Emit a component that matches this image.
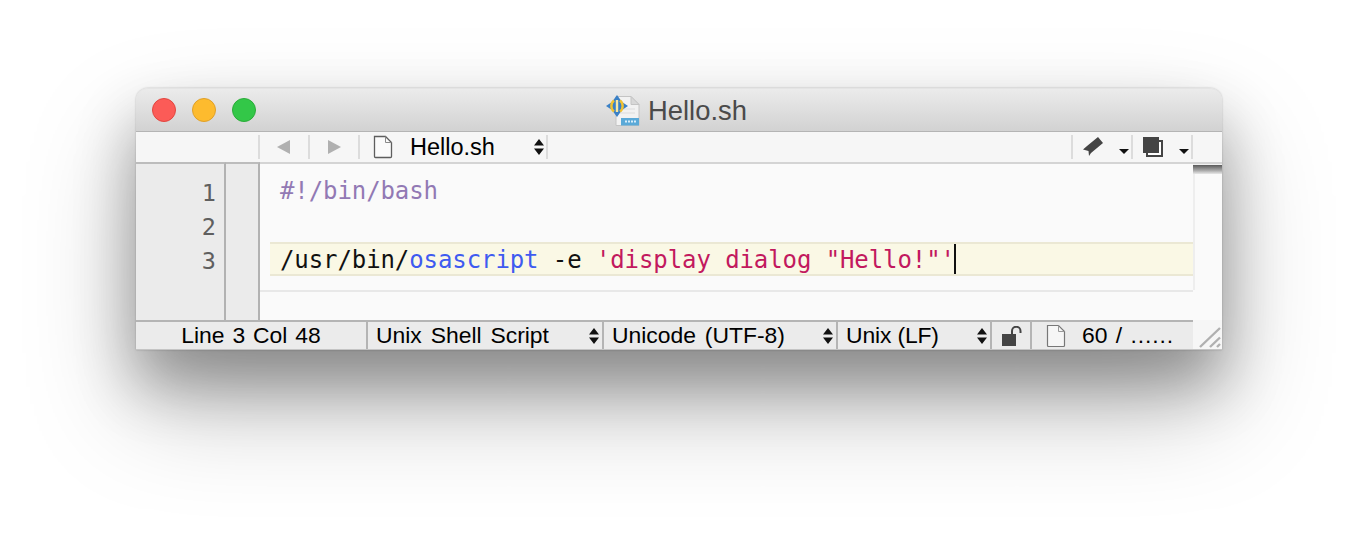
<div class="page">
  <div class="window">
    <header class="titlebar">
      <div class="lights">
        <span class="light red"></span>
        <span class="light yellow"></span>
        <span class="light green"></span>
      </div>
      <div class="title">
        <svg width="36" height="32" viewBox="0 0 36 32">
          <path d="M10 1.500h15l8 8v21H10z" fill="#f2f2f2" stroke="#c4c4c4" />
          <path d="M25 1.500v8h8z" fill="#d8d8d8" stroke="#c4c4c4" />
          <path d="M14 14h15M14 18h15" stroke="#dcdcdc" />
          <rect x="15" y="23" width="18" height="7.500" fill="#5aa9d8" />
          <path d="M19 26.500h2M22 26.500h2M25 26.500h2M28 26.500h2" stroke="#d9eefa" stroke-width="2" />
          <path d="M0 11L6 7 11 0 16 7 22 11 16 15 11 22 6 15z" fill="#3a80c6" />
          <path d="M8 5.500C4.500 8 4.500 14 8 16.500M14 5.500C17.500 8 17.500 14 14 16.500" fill="none" stroke="#f2c230" stroke-width="2.400" />
          <path d="M11 5v12" stroke="#f7e7a6" stroke-width="2.400" />
        </svg>
        <span>Hello.sh</span>
      </div>
    </header>

    <div class="toolbar">
      <div class="tool-spacer"></div>
      <div class="tool nav">
        <svg width="16" height="14" viewBox="0 0 16 14"><path d="M14 0v14L1 7z" fill="#b0b0b0" /></svg>
      </div>
      <div class="tool nav">
        <svg width="16" height="14" viewBox="0 0 16 14"><path d="M2 0v14l13-7z" fill="#b0b0b0" /></svg>
      </div>
      <div class="tool file">
        <svg width="20" height="24" viewBox="0 0 20 24">
          <path d="M1.500 1.500h11l6 6v14a1 1 0 0 1-1 1h-15a1 1 0 0 1-1-1z" fill="#fbfbfb" stroke="#5e5e5e" stroke-width="1.300" />
          <path d="M12.500 1.500v6h6" fill="none" stroke="#8a8a8a" />
        </svg>
        <span class="file-name">Hello.sh</span>
        <svg class="updown" width="10" height="18" viewBox="0 0 10 18"><path d="M5 1l5 6.500H0zM5 17l5-6.500H0z" fill="#111" /></svg>
      </div>
      <div class="tool-fill"></div>
      <div class="tool menu">
        <svg width="22" height="22" viewBox="0 0 22 22"><path d="M16 1l5 6L9 17l-2 3-.5-5L1 13.500 5 10z" fill="#444" /></svg>
        <svg class="caret" width="10" height="5" viewBox="0 0 10 5"><path d="M0 0h10L5 5z" fill="#111" /></svg>
      </div>
      <div class="tool menu">
        <svg width="22" height="22" viewBox="0 0 22 22">
          <rect x="5" y="5" width="15" height="15" fill="#fff" stroke="#444" stroke-width="2" />
          <rect x="1" y="1" width="16" height="16" fill="#444" />
        </svg>
        <svg class="caret" width="10" height="5" viewBox="0 0 10 5"><path d="M0 0h10L5 5z" fill="#111" /></svg>
      </div>
      <div class="tool-end"></div>
    </div>

    <div class="body">
      <div class="gutter">
        <span>1</span>
        <span>2</span>
        <span>3</span>
      </div>
      <div class="fold"></div>
      <div class="editor">
        <div class="code">
          <div class="line comment">#!/bin/bash</div>
          <div class="line"></div>
          <div class="line current">/usr/bin/<span class="cmd">osascript</span> -e <span class="str">'display dialog "Hello!"'</span><i class="caret-bar"></i></div>
        </div>
      </div>
      <div class="scroll">
        <div class="scroll-cap"></div>
        <div class="scroll-track"></div>
      </div>
    </div>

    <footer class="status">
      <div class="cell position">Line 3 Col 48</div>
      <div class="cell pop syntax">Unix Shell Script
        <svg width="10" height="18" viewBox="0 0 10 18"><path d="M5 1l5 6.500H0zM5 17l5-6.500H0z" fill="#111" /></svg>
      </div>
      <div class="cell pop encoding">Unicode (UTF-8)
        <svg width="10" height="18" viewBox="0 0 10 18"><path d="M5 1l5 6.500H0zM5 17l5-6.500H0z" fill="#111" /></svg>
      </div>
      <div class="cell pop endings">Unix (LF)
        <svg width="10" height="18" viewBox="0 0 10 18"><path d="M5 1l5 6.500H0zM5 17l5-6.500H0z" fill="#111" /></svg>
      </div>
      <div class="cell lock">
        <svg width="22" height="20" viewBox="0 0 22 20">
          <rect x="1" y="8" width="14" height="12" fill="#444" />
          <path d="M11 8V5a4 4 0 0 1 8.500 0v2" fill="none" stroke="#444" stroke-width="2" />
        </svg>
      </div>
      <div class="cell size">
        <svg width="20" height="24" viewBox="0 0 20 24">
          <path d="M1.500 1.500h11l6 6v14a1 1 0 0 1-1 1h-15a1 1 0 0 1-1-1z" fill="#f6f6f6" stroke="#777" stroke-width="1.200" />
          <path d="M12.500 1.500v6h6" fill="none" stroke="#999" />
        </svg>
        <span>60 / <span class="dots">......</span></span>
      </div>
      <div class="grip">
        <svg width="22" height="21" viewBox="0 0 22 21">
          <path d="M1 20L21 1M11 20L21 10.500M18 20l3-3" stroke="#b0b0b0" stroke-width="2.400" fill="none" />
        </svg>
      </div>
    </footer>
  </div>
</div>

<style>
  :global(body) {
    margin: 0;
    background: #fff;
  }
  .page {
    height: 534px;
    box-sizing: border-box;
    padding: 88px 0 0 136px;
    overflow: hidden;
    background: #fff;
  }
  .window {
    width: 1086px;
    height: 262px;
    display: flex;
    flex-direction: column;
    border-radius: 12px 12px 0 0;
    font-family: "Liberation Sans", Arial, sans-serif;
    color: #111;
    background: #f6f6f6;
    box-shadow: 0 34px 60px rgba(0, 0, 0, 0.3), 0 54px 110px rgba(0, 0, 0, 0.26), 0 0 2px rgba(0, 0, 0, 0.25);
  }
  .titlebar {
    height: 44px;
    flex: none;
    box-sizing: border-box;
    position: relative;
    display: flex;
    align-items: center;
    justify-content: center;
    border-radius: 12px 12px 0 0;
    background: linear-gradient(#ebebeb, #d2d2d2);
    border-top: 1px solid #e4e4e4;
    border-bottom: 1px solid #b4b4b4;
  }
  .lights {
    position: absolute;
    left: 16px;
    top: 9px;
    display: flex;
    gap: 16px;
  }
  .light {
    width: 24px;
    height: 24px;
    box-sizing: border-box;
    border-radius: 50%;
    border: 1px solid;
  }
  .red { background: #fc5b57; border-color: #e2463f; }
  .yellow { background: #fdbb2e; border-color: #e0a028; }
  .green { background: #33c748; border-color: #2bac39; }
  .title {
    display: flex;
    align-items: center;
    gap: 6px;
    font-size: 27.4px;
    color: #4a4a4a;
    margin: 2px 0 0 -5px;
  }
  .toolbar {
    height: 32px;
    flex: none;
    box-sizing: border-box;
    display: flex;
    align-items: stretch;
    background: #f6f6f6;
    padding: 3px 0;
    border-bottom: 2px solid #d4d4d4;
  }
  .tool-spacer { width: 122px; }
  .tool {
    box-sizing: border-box;
    border-left: 2px solid #dcdcdc;
    display: flex;
    align-items: center;
  }
  .nav {
    width: 50px;
    justify-content: center;
  }
  .file {
    width: 188px;
    padding-left: 13px;
    font-size: 23.5px;
    color: #000;
  }
  .file-name {
    margin-left: 17px;
    flex: 1;
  }
  .updown { margin-right: 2px; }
  .tool-fill {
    flex: 1;
    border-left: 2px solid #dcdcdc;
  }
  .menu {
    width: 60px;
    padding-left: 9px;
    position: relative;
  }
  .caret {
    position: absolute;
    right: 2px;
    bottom: 5px;
  }
  .tool-end {
    width: 29px;
    border-left: 2px solid #dcdcdc;
  }
  .body {
    flex: 1;
    display: flex;
    min-height: 0;
    background: #fafafa;
  }
  .gutter {
    width: 90px;
    box-sizing: border-box;
    margin-top: -2px;
    background: #ebebeb;
    border-right: 2px solid #b2b2b2;
    border-top: 2px solid #bcbcbc;
    padding: 12px 8px 0 0;
    display: flex;
    flex-direction: column;
    align-items: flex-end;
    font-family: "DejaVu Sans Mono", monospace;
    font-size: 23.5px;
    line-height: 34px;
    color: #5f5f5f;
  }
  .fold {
    width: 34px;
    box-sizing: border-box;
    margin-top: -2px;
    background: #ebebeb;
    border-right: 2px solid #b2b2b2;
    border-top: 2px solid #bcbcbc;
  }
  .editor {
    flex: 1;
    display: flex;
    flex-direction: column;
  }
  .code {
    height: 128px;
    box-sizing: border-box;
    padding: 10px 0 0 10px;
    border-bottom: 2px solid #e8e8e8;
    font-family: "DejaVu Sans Mono", monospace;
    font-size: 24px;
    letter-spacing: -0.09px;
    color: #111;
  }
  .line {
    height: 34px;
    line-height: 33px;
    padding-left: 10px;
    white-space: pre;
    box-sizing: border-box;
  }
  .comment {
    padding-top: 1px;
    color: #9279b4;
  }
  .current {
    background: #faf8e5;
    border-top: 2px solid #ebe8d4;
    border-bottom: 2px solid #ebe8d4;
  }
  .cmd { color: #3f5bf0; }
  .str { color: #c2195e; }
  .caret-bar {
    display: inline-block;
    width: 2px;
    height: 30px;
    margin-left: -1px;
    background: #111;
    vertical-align: top;
  }
  .scroll {
    width: 29px;
    display: flex;
    flex-direction: column;
  }
  .scroll-cap {
    height: 10px;
    box-sizing: border-box;
    background: linear-gradient(#5a5a5a, #a8a8a8 60%, #e8e8e8);
    border-top: 1px solid #f0f0f0;
  }
  .scroll-track {
    height: 116px;
    border-left: 2px solid #eeeeee;
    background: #fafafa;
  }
  .status {
    height: 30px;
    flex: none;
    box-sizing: border-box;
    display: flex;
    align-items: stretch;
    background: #ebebeb;
    border-top: 2px solid #b4b4b4;
    border-bottom: 1px solid #c4c4c4;
    font-size: 22.9px;
    color: #000;
  }
  .cell {
    display: flex;
    align-items: center;
    box-sizing: border-box;
    border-right: 2px solid #b4b4b4;
    white-space: pre;
  }
  .position {
    width: 232px;
    justify-content: center;
    word-spacing: 1.5px;
  }
  .pop {
    justify-content: space-between;
    padding: 0 3px 0 8px;
  }
  .syntax {
    width: 236px;
    word-spacing: 2.5px;
  }
  .encoding {
    width: 234px;
    word-spacing: 2.5px;
  }
  .endings {
    width: 154px;
    letter-spacing: -0.15px;
  }
  .lock {
    width: 40px;
    padding-left: 9px;
  }
  .size {
    flex: 1;
    border-right: none;
    padding-left: 14px;
    gap: 16px;
    word-spacing: 2px;
  }
  .dots { letter-spacing: 0.9px; }
  .grip {
    width: 29px;
    background: #f6f6f6;
    margin-top: -2px;
    display: flex;
    align-items: flex-end;
    justify-content: flex-end;
    padding: 0 1px 1px 0;
    box-sizing: border-box;
  }
</style>
